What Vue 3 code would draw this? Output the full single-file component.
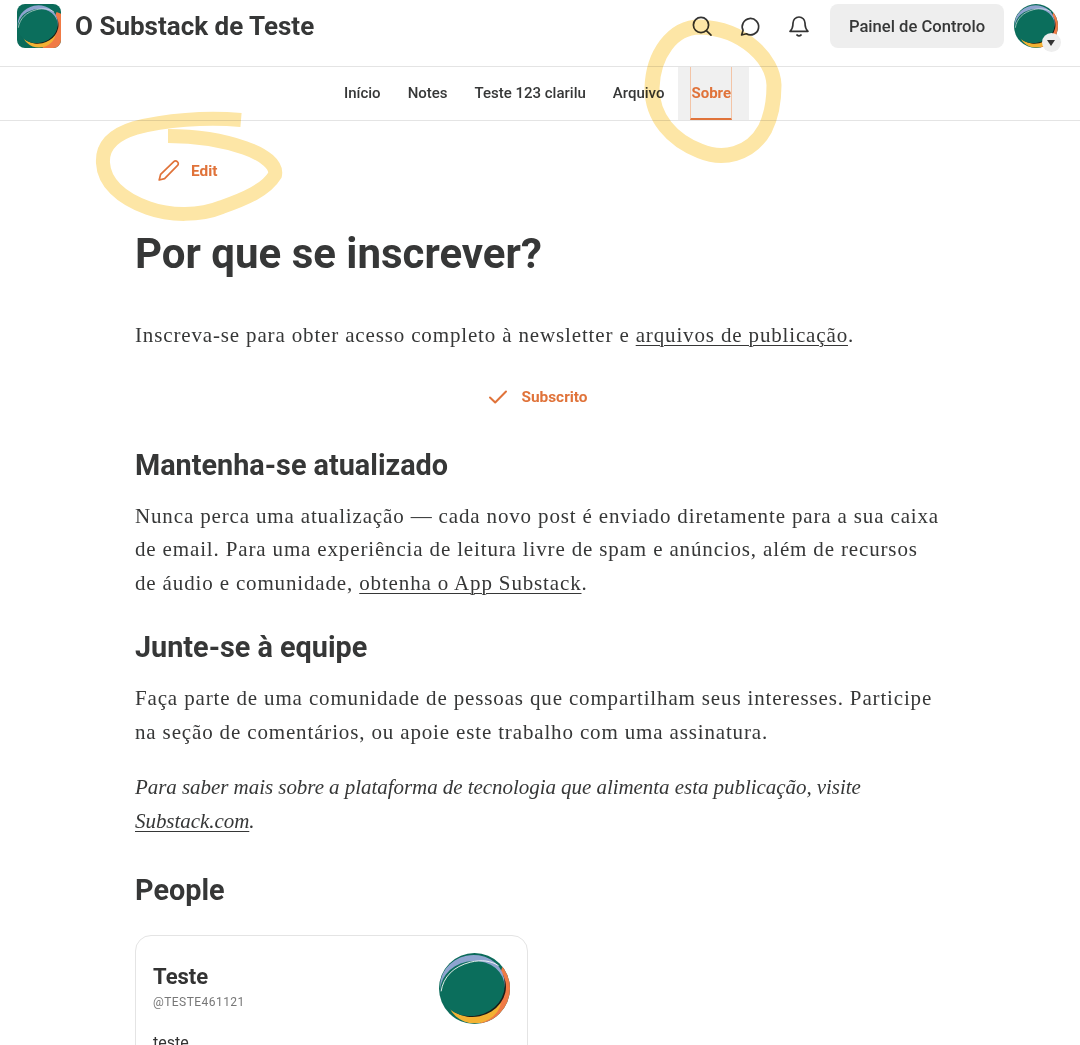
<template>
  <div class="page">
    <svg class="defs" width="0" height="0">
      <symbol id="art" viewBox="0 0 100 100">
        <rect width="100" height="100" fill="#0b6b5a" />
        <path d="M90 18L100 22V100H58Z" fill="#f07a45" />
        <ellipse cx="50" cy="64" rx="38" ry="35" fill="#f3b233" />
        <ellipse cx="49" cy="49.5" rx="45.5" ry="40.5" transform="rotate(-12 49 49.5)" fill="#1c1c17" />
        <ellipse cx="47" cy="44" rx="45.5" ry="41" transform="rotate(-12 47 44)" fill="#8ea4cf" />
        <ellipse cx="47" cy="50" rx="45.5" ry="38.5" transform="rotate(-12 47 50)" fill="#0b6e5c" />
        <path d="M3 54C6 34 20 19 44 13C60 9 74 11 84 18" fill="none" stroke="#f4f7f5" stroke-width="1.3" />
      </symbol>
    </svg>

    <header class="topbar">
      <svg class="logo"><use href="#art" /></svg>
      <h1 class="site-name">O Substack de Teste</h1>
      <div class="actions">
        <button class="icon-btn" aria-label="search">
          <svg viewBox="0 0 24 24" width="24" height="24" fill="none" stroke="#333" stroke-width="1.7">
            <circle cx="11" cy="11" r="7.6" />
            <path d="M16.6 16.8l4.4 4.4" stroke-linecap="round" />
          </svg>
        </button>
        <button class="icon-btn" aria-label="messages">
          <svg viewBox="0 0 24 24" width="24" height="24" fill="none" stroke="#333" stroke-width="1.7" stroke-linejoin="round">
            <path d="M3.6 21l1.5-4.7A8.2 8.2 0 1 1 8.4 19.8z" />
          </svg>
        </button>
        <button class="icon-btn" aria-label="notifications">
          <svg viewBox="0 0 24 24" width="24" height="24" fill="none" stroke="#333" stroke-width="1.7" stroke-linecap="round" stroke-linejoin="round">
            <path d="M7 9a6 6 0 0 1 12 0c0 5 1 6.5 3 8.3H4c2-1.8 3-3.3 3-8.3z" />
            <path d="M11 21c1 .8 3 .8 4 0" />
          </svg>
        </button>
        <button class="dash-btn">Painel de Controlo</button>
        <div class="user">
          <svg class="user-pic"><use href="#art" /></svg>
          <span class="caret"></span>
        </div>
      </div>
    </header>

    <nav class="tabs">
      <a v-for="item in tabs" :key="item" class="tab">{{ item }}</a>
      <div class="tab-hover">
        <a class="tab active">Sobre</a>
      </div>
    </nav>

    <main class="content">
      <button class="edit-btn">
        <svg viewBox="0 0 24 24" width="24" height="24" fill="none" stroke="#e0733a" stroke-width="1.7" stroke-linejoin="round">
          <path d="M3.2 21l1.4-5.6L17.8 2.6a2.4 2.4 0 0 1 3.4 0l.4.4a2.4 2.4 0 0 1 0 3.4L8.6 19.6z" />
        </svg>
        Edit
      </button>

      <h1 class="title">Por que se inscrever?</h1>
      <p class="intro">Inscreva-se para obter acesso completo à newsletter e <a>arquivos de publicação</a>.</p>

      <div class="subscribed">
        <svg viewBox="0 0 20 20" width="20" height="20" fill="none" stroke="#e0733a" stroke-width="2" stroke-linecap="round" stroke-linejoin="round">
          <path d="M2 10.5l5.2 5L18 4.5" />
        </svg>
        <span>Subscrito</span>
      </div>

      <h2>Mantenha-se atualizado</h2>
      <p>Nunca perca uma atualização — cada novo post é enviado diretamente para a sua caixa de email. Para uma experiência de leitura livre de spam e anúncios, além de recursos de áudio e comunidade, <a>obtenha o App Substack</a>.</p>

      <h2 class="second">Junte-se à equipe</h2>
      <p>Faça parte de uma comunidade de pessoas que compartilham seus interesses. Participe na seção de comentários, ou apoie este trabalho com uma assinatura.</p>
      <p class="note"><em>Para saber mais sobre a plataforma de tecnologia que alimenta esta publicação, visite <a>Substack.com</a>.</em></p>

      <h2 class="people">People</h2>
      <div class="card">
        <div class="card-head">
          <div>
            <div class="card-name">Teste</div>
            <div class="card-handle">@TESTE461121</div>
          </div>
          <svg class="card-pic"><use href="#art" /></svg>
        </div>
        <div class="card-bio">teste</div>
      </div>
    </main>

    <!-- marcações feitas à mão por cima da página -->
    <svg class="marks" viewBox="0 0 1080 1045" width="1080" height="1045" fill="none" stroke="#fde6a6" stroke-width="14">
      <path d="M241 120C205 117 165 120 135 128C112 135 102 147 103 163C104 182 120 198 148 208C170 216 200 216 222 207C245 199 266 190 275 175C277 165 265 155 245 148C222 140 195 136 168 136" />
      <path stroke-width="15" d="M700 27C672 27 653 55 652 88C652 118 672 140 700 151C722 160 750 156 765 129C772 115 774 100 774 85C773 60 745 29 700 27Z" />
    </svg>
  </div>
</template>

<script setup>
const tabs = ['Início', 'Notes', 'Teste 123 clarilu', 'Arquivo']
</script>

<style>
html,
body {
  height: 1045px;
  overflow: hidden;
  background: #fff;
}
</style>

<style scoped>
.page {
  position: relative;
  width: 1080px;
  height: 1045px;
  overflow: hidden;
  background: #fff;
  color: #333;
  font-family: Roboto, "Liberation Sans", sans-serif;
}

.defs {
  position: absolute;
}

.topbar {
  display: flex;
  align-items: center;
  height: 44px;
  padding: 4px 22px 18px 17px;
  border-bottom: 1px solid #e4e4e4;
}
.logo {
  width: 44px;
  height: 44px;
  border-radius: 8px;
}
.site-name {
  margin: 0 0 0 14px;
  font-size: 26px;
  font-weight: 700;
  color: #363737;
}
.actions {
  margin-left: auto;
  display: flex;
  align-items: center;
}
.icon-btn {
  width: 24px;
  height: 24px;
  margin-right: 24px;
  padding: 0;
  border: none;
  background: none;
}
.dash-btn {
  width: 174px;
  height: 44px;
  margin-left: -4px;
  border: none;
  border-radius: 8px;
  background: #eeeeee;
  color: #363737;
  font-family: inherit;
  font-size: 16.6px;
  font-weight: 500;
}
.user {
  position: relative;
  width: 44px;
  height: 44px;
  margin-left: 10px;
}
.user-pic {
  width: 44px;
  height: 44px;
  border-radius: 50%;
}
.caret {
  position: absolute;
  right: -3px;
  bottom: -4px;
  width: 19px;
  height: 19px;
  border-radius: 50%;
  background: #eeeeee;
}
.caret::after {
  content: "";
  position: absolute;
  left: 5px;
  top: 7px;
  border-left: 4.5px solid transparent;
  border-right: 4.5px solid transparent;
  border-top: 6px solid #333;
}

.tabs {
  display: flex;
  justify-content: center;
  align-items: stretch;
  gap: 27px;
  height: 53px;
  padding-left: 13px;
  border-bottom: 1px solid #e4e4e4;
  font-size: 15px;
  font-weight: 500;
}
.tab {
  display: flex;
  align-items: center;
  padding-bottom: 2px;
  color: #363737;
}
.tab-hover {
  display: flex;
  margin-left: -13px;
  padding: 0 17px 0 12px;
  background: #f0f0f0;
}
.tab.active {
  padding-bottom: 0;
  color: #e0733a;
  font-weight: 700;
  border-left: 1px solid #f3c4a6;
  border-right: 1px solid #f3c4a6;
  border-bottom: 2px solid #e0733a;
}

.content {
  width: 810px;
  margin-left: 135px;
}
.content p {
  margin: 0;
  font-family: "Liberation Serif", serif;
  font-size: 21px;
  line-height: 33.5px;
  letter-spacing: 0.85px;
  color: #363737;
}
.content a {
  text-decoration: underline;
  text-decoration-thickness: 1px;
  text-underline-offset: 3px;
}
.content .note {
  margin-top: 22px;
  letter-spacing: -0.05px;
}
.edit-btn {
  display: flex;
  align-items: center;
  gap: 11px;
  height: 30px;
  margin: 35px 0 0 21px;
  padding: 0;
  border: none;
  background: none;
  color: #e0733a;
  font-family: inherit;
  font-size: 15.4px;
  font-weight: 700;
}
.title {
  margin: 44px 0 0;
  font-size: 42px;
  line-height: 48px;
  font-weight: 700;
  color: #363737;
}
.content .intro {
  margin-top: 41px;
}
.subscribed {
  display: flex;
  justify-content: center;
  align-items: center;
  gap: 13px;
  margin-top: 32px;
  padding-right: 4px;
  height: 24px;
  color: #e0733a;
  font-size: 15.4px;
  font-weight: 700;
}
h2 {
  margin: 38px 0 0;
  font-size: 28.8px;
  line-height: 36px;
  font-weight: 700;
  color: #363737;
}
.content h2 + p {
  margin-top: 17px;
}
h2.second {
  margin-top: 29px;
}
h2.people {
  margin-top: 34px;
}
.card {
  width: 393px;
  margin-top: 27px;
  padding: 17px;
  box-sizing: border-box;
  border: 1px solid #e4e4e4;
  border-radius: 16px;
}
.card-head {
  display: flex;
  justify-content: space-between;
}
.card-name {
  margin-top: 11px;
  font-size: 22px;
  font-weight: 700;
}
.card-handle {
  margin-top: 6px;
  font-size: 12px;
  letter-spacing: 0.45px;
  color: #777;
}
.card-pic {
  width: 71px;
  height: 71px;
  border-radius: 50%;
}
.card-bio {
  margin-top: 9px;
  font-size: 16px;
}

.marks {
  position: absolute;
  left: 0;
  top: 0;
  pointer-events: none;
  mix-blend-mode: multiply;
}
</style>
